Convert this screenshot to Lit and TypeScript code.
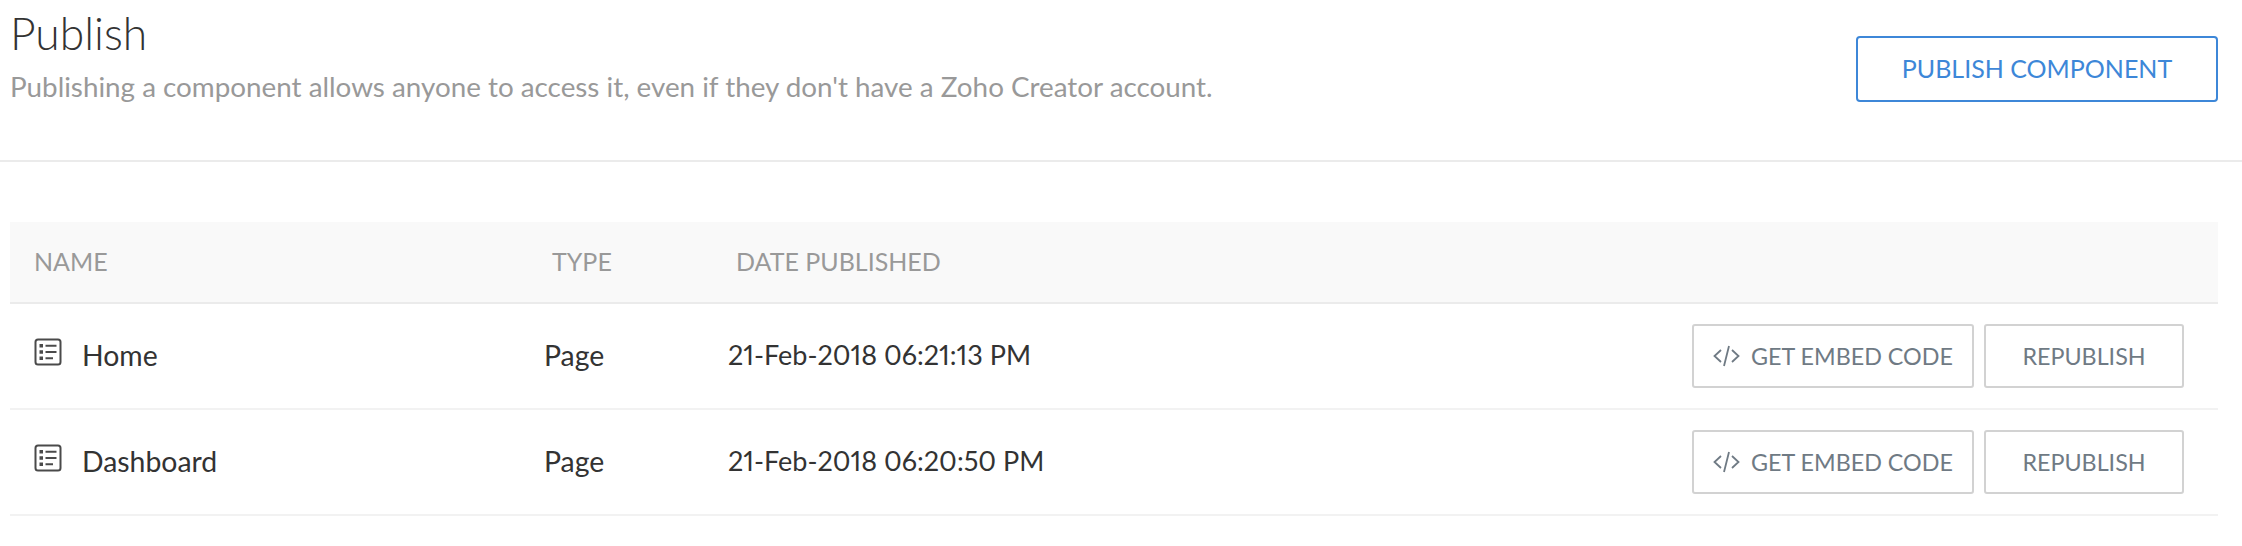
import { LitElement, html, css, svg } from 'lit';
import { customElement } from 'lit/decorators.js';

const rows = [
  { name: 'Home', type: 'Page', date: '21-Feb-2018 06:21:13 PM' },
  { name: 'Dashboard', type: 'Page', date: '21-Feb-2018 06:20:50 PM' },
];

const listIcon = svg`
  <svg class="list-icon" width="28" height="28" viewBox="0 0 28 28" fill="none" stroke="#4a4a4a" stroke-width="2">
    <rect x="1.5" y="1.5" width="25" height="25" rx="2.5"></rect>
    <rect x="5.5" y="6" width="3.5" height="3.5" fill="#4a4a4a" stroke="none"></rect>
    <path d="M11.5 7.75h11"></path>
    <rect x="5.5" y="12.25" width="3.5" height="3.5" fill="#4a4a4a" stroke="none"></rect>
    <path d="M11.5 14h11"></path>
    <rect x="5.5" y="18.5" width="3.5" height="3.5" fill="#4a4a4a" stroke="none"></rect>
    <path d="M11.5 20.25h7.5"></path>
  </svg>`;

const codeIcon = svg`
  <svg class="code-icon" width="27" height="22" viewBox="0 0 27 22" fill="none" stroke="#6f7a84" stroke-width="1.8">
    <path d="M8 5l-6.5 6 6.5 6"></path>
    <path d="M16 1l-5 20"></path>
    <path d="M19 5l6.5 6-6.5 6"></path>
  </svg>`;

@customElement('app-root')
export class AppRoot extends LitElement {
  static styles = css`
    :host {
      display: block;
      width: 2242px;
      height: 546px;
      background: #fff;
      font-family: 'Lato', 'Liberation Sans', sans-serif;
      color: #333;
    }

    .head {
      display: flex;
      justify-content: space-between;
      height: 162px;
      padding: 0 24px 0 10px;
      box-sizing: border-box;
      border-bottom: 2px solid #ebebeb;
    }

    .title {
      margin: 8px 0 0;
      font-size: 44.4px;
      font-weight: 300;
      line-height: 50px;
      color: #333;
    }

    .desc {
      margin: 12px 0 0;
      font-size: 27.8px;
      font-weight: 400;
      line-height: 34px;
      color: #999;
    }

    .publish {
      box-sizing: border-box;
      width: 362px;
      height: 66px;
      margin-top: 36px;
      padding-bottom: 3px;
      background: #fff;
      border: 2px solid #3d87d8;
      border-radius: 4px;
      font: inherit;
      font-size: 25px;
      color: #3d87d8;
    }

    .table {
      margin: 60px 24px 0 10px;
    }

    .row {
      display: grid;
      grid-template-columns: 534px 184px 1fr auto;
      align-items: center;
      box-sizing: border-box;
    }

    .labels {
      height: 82px;
      padding-bottom: 3px;
      background: #f9f9f9;
      border-bottom: 2px solid #ebebeb;
      font-size: 25px;
      color: #999;
    }

    .labels .name {
      padding-left: 24px;
    }

    .labels .type {
      padding-left: 8px;
    }

    .labels .date {
      padding-left: 8px;
    }

    .item {
      height: 106px;
      border-bottom: 2px solid #f2f2f2;
      font-size: 28.4px;
      color: #333;
    }

    .item > div:not(.actions) {
      margin-bottom: 3px;
    }

    .item .date {
      font-size: 27px;
      font-variant-numeric: proportional-nums;
    }

    .name {
      display: flex;
      align-items: center;
      gap: 20px;
    }

    .item .name {
      padding-left: 24px;
    }

    .list-icon {
      margin-bottom: 6px;
    }

    .actions {
      display: flex;
      gap: 10px;
      padding-right: 34px;
    }

    .action {
      display: flex;
      align-items: center;
      justify-content: center;
      gap: 11px;
      box-sizing: border-box;
      height: 64px;
      background: #fff;
      border: 2px solid #d2d2d2;
      border-radius: 3px;
      font: inherit;
      font-size: 23.3px;
      color: #6f7a84;
    }

    .embed {
      width: 282px;
    }

    .republish {
      width: 200px;
    }
  `;

  render() {
    return html`
      <div class="head">
        <div>
          <h1 class="title">Publish</h1>
          <p class="desc">Publishing a component allows anyone to access it, even if they don't have a Zoho Creator account.</p>
        </div>
        <button class="publish">PUBLISH COMPONENT</button>
      </div>
      <div class="table">
        <div class="row labels">
          <div class="name">NAME</div>
          <div class="type">TYPE</div>
          <div class="date">DATE PUBLISHED</div>
        </div>
        ${rows.map(
          (r) => html`
            <div class="row item">
              <div class="name">${listIcon}<span>${r.name}</span></div>
              <div>${r.type}</div>
              <div class="date">${r.date}</div>
              <div class="actions">
                <button class="action embed">${codeIcon}GET EMBED CODE</button>
                <button class="action republish">REPUBLISH</button>
              </div>
            </div>
          `
        )}
      </div>
    `;
  }
}
